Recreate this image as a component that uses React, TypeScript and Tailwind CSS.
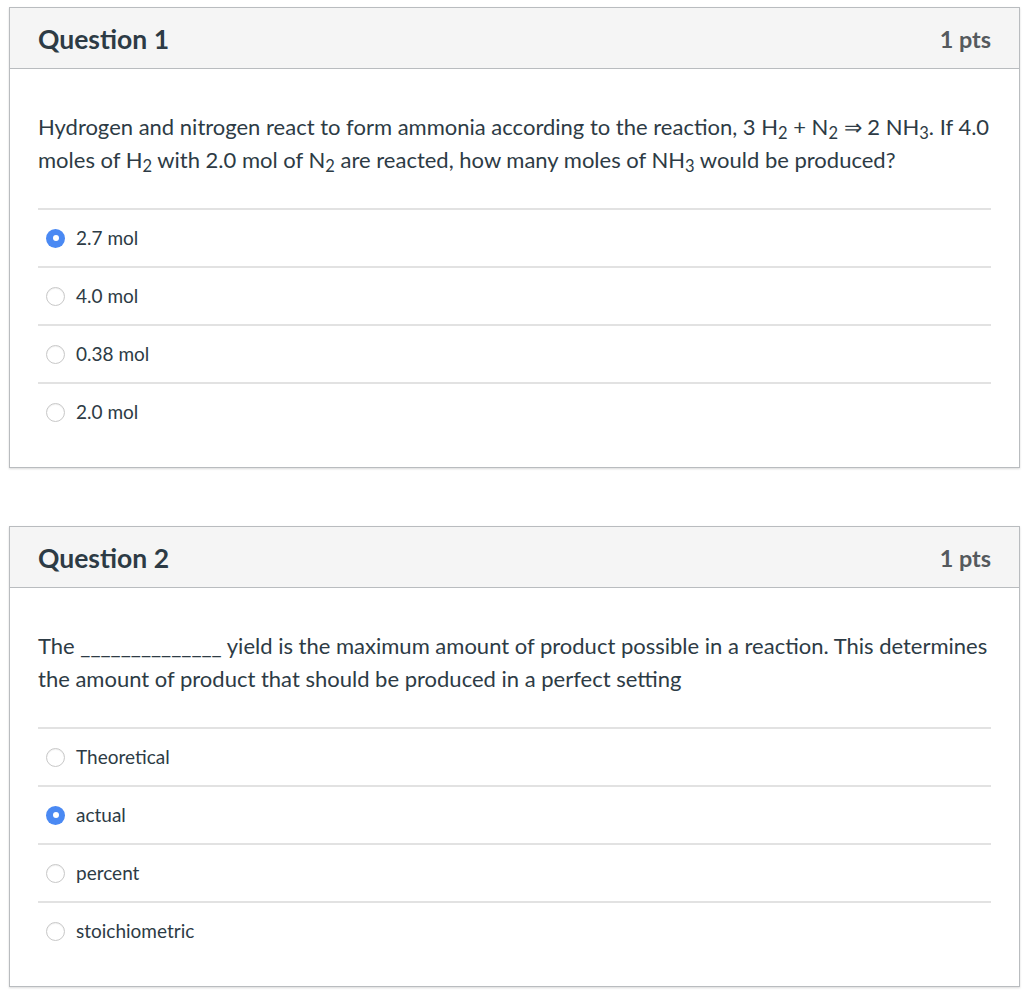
import React from "react";

type Opt = { label: string; selected?: boolean };

function Radio({ selected }: { selected?: boolean }) {
  if (selected) {
    return (
      <span className="flex h-[19px] w-[19px] shrink-0 items-center justify-center rounded-full bg-[#4a89f3]">
        <span className="h-[6px] w-[6px] rounded-full bg-white" />
      </span>
    );
  }
  return (
    <span className="h-[19px] w-[19px] shrink-0 rounded-full border border-[#c8c8c8] bg-white shadow-[inset_0_1px_1px_rgba(0,0,0,0.06)]" />
  );
}

function Question({
  title,
  children,
  options,
}: {
  title: string;
  children: React.ReactNode;
  options: Opt[];
}) {
  return (
    <div className="border border-[#b9bcbf] bg-white shadow-[0_1px_2px_rgba(0,0,0,0.15)]">
      <div className="flex h-[61px] items-center justify-between border-b border-[#b9bcbf] bg-[#f5f5f5] px-[28px] pt-[3px]">
        <h2 className="text-[26.5px] font-bold text-[#2d3b45]">{title}</h2>
        <span className="text-[23.4px] font-bold text-[#555a5e]">1 pts</span>
      </div>
      <div className="px-[28px] pb-[27px] pt-[41px]">
        <div className="text-[22px] leading-[33px] text-[#2d3b45]">{children}</div>
        <div className="mt-[32px]">
          {options.map((o) => (
            <div
              key={o.label}
              className="flex h-[58px] items-center gap-[11px] border-t-2 border-[#e2e2e2] pl-[8px] text-[19px] text-[#2d3b45]"
            >
              <Radio selected={o.selected} />
              <span>{o.label}</span>
            </div>
          ))}
        </div>
      </div>
    </div>
  );
}

export default function App() {
  return (
    <div
      className="min-h-[1006px] bg-white px-[9px] pt-[7px]"
      style={{ fontFamily: "Lato, 'Open Sans', sans-serif" }}
    >
      <div className="flex w-[1011px] flex-col gap-[58px]">
        <Question
          title="Question 1"
          options={[
            { label: "2.7 mol", selected: true },
            { label: "4.0 mol" },
            { label: "0.38 mol" },
            { label: "2.0 mol" },
          ]}
        >
          Hydrogen and nitrogen react to form ammonia according to the reaction, 3 H<sub>2</sub> + N
          <sub>2</sub> ⇒ 2 NH<sub>3</sub>. If 4.0 moles of H<sub>2</sub> with 2.0 mol of N<sub>2</sub>{" "}
          are reacted, how many moles of NH<sub>3</sub> would be produced?
        </Question>
        <Question
          title="Question 2"
          options={[
            { label: "Theoretical" },
            { label: "actual", selected: true },
            { label: "percent" },
            { label: "stoichiometric" },
          ]}
        >
          The ______________ yield is the maximum amount of product possible in a reaction. This
          determines the amount of product that should be produced in a perfect setting
        </Question>
      </div>
    </div>
  );
}
